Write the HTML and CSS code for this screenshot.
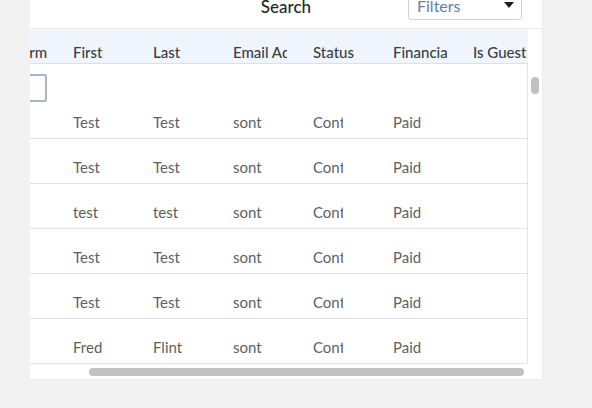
FILE: index.html
```html
<!DOCTYPE html>
<html>
<head>
<meta charset="utf-8">
<link rel="stylesheet" href="styles.css">
</head>
<body>
<div class="page">
  <div class="panel">
    <div class="toolbar">
      <div class="spacer"></div>
      <div class="title">Search</div>
      <div class="filters"><span class="filters-label">Filters</span><span class="caret"></span></div>
    </div>
    <div class="table">
      <div class="head-wrap">
        <div class="row head">
          <div class="cell c0"><span class="txt">Form</span></div>
          <div class="cell"><span class="txt">First</span></div>
          <div class="cell"><span class="txt">Last</span></div>
          <div class="cell"><span class="txt">Email Address</span></div>
          <div class="cell"><span class="txt">Status</span></div>
          <div class="cell"><span class="txt">Financial</span></div>
          <div class="cell"><span class="txt">Is Guest</span></div>
        </div>
      </div>
      <div class="head-corner"></div>
      <div class="body">
        <div class="row filter-row">
          <div class="cell c0"><div class="filter-box"></div></div>
        </div>
        <div class="row data first-row">
          <div class="cell c0"></div>
          <div class="cell"><span class="val">Test</span></div>
          <div class="cell"><span class="val">Test</span></div>
          <div class="cell"><span class="val">sont</span></div>
          <div class="cell"><span class="val">Contact</span></div>
          <div class="cell"><span class="val">Paid</span></div>
          <div class="cell"><span class="val"></span></div>
        </div>
        <div class="row data">
          <div class="cell c0"></div>
          <div class="cell"><span class="val">Test</span></div>
          <div class="cell"><span class="val">Test</span></div>
          <div class="cell"><span class="val">sont</span></div>
          <div class="cell"><span class="val">Contact</span></div>
          <div class="cell"><span class="val">Paid</span></div>
          <div class="cell"><span class="val"></span></div>
        </div>
        <div class="row data">
          <div class="cell c0"></div>
          <div class="cell"><span class="val">test</span></div>
          <div class="cell"><span class="val">test</span></div>
          <div class="cell"><span class="val">sont</span></div>
          <div class="cell"><span class="val">Contact</span></div>
          <div class="cell"><span class="val">Paid</span></div>
          <div class="cell"><span class="val"></span></div>
        </div>
        <div class="row data">
          <div class="cell c0"></div>
          <div class="cell"><span class="val">Test</span></div>
          <div class="cell"><span class="val">Test</span></div>
          <div class="cell"><span class="val">sont</span></div>
          <div class="cell"><span class="val">Contact</span></div>
          <div class="cell"><span class="val">Paid</span></div>
          <div class="cell"><span class="val"></span></div>
        </div>
        <div class="row data">
          <div class="cell c0"></div>
          <div class="cell"><span class="val">Test</span></div>
          <div class="cell"><span class="val">Test</span></div>
          <div class="cell"><span class="val">sont</span></div>
          <div class="cell"><span class="val">Contact</span></div>
          <div class="cell"><span class="val">Paid</span></div>
          <div class="cell"><span class="val"></span></div>
        </div>
        <div class="row data">
          <div class="cell c0"></div>
          <div class="cell"><span class="val">Fred</span></div>
          <div class="cell"><span class="val">Flint</span></div>
          <div class="cell"><span class="val">sont</span></div>
          <div class="cell"><span class="val">Contact</span></div>
          <div class="cell"><span class="val">Paid</span></div>
          <div class="cell"><span class="val"></span></div>
        </div>
      </div>
      <div class="vscroll"><div class="vthumb"></div></div>
      <div class="hscroll"><div class="hthumb"></div></div>
    </div>
  </div>
</div>
</body>
</html>
```

FILE: styles.css
```css
* { box-sizing: border-box; }

html, body {
  margin: 0;
  padding: 0;
  background: #f2f2f2;
  overflow: hidden;
}

body {
  font-family: "Lato", "Open Sans", sans-serif;
  width: 592px;
  height: 408px;
}

.page {
  display: flex;
  height: 408px;
  padding-left: 30px;
}

.panel {
  width: 513px;
  height: 380px;
  background: #ffffff;
  display: flex;
  flex-direction: column;
  border-right: 1px solid #ebebeb;
  border-bottom: 1px solid #ebebeb;
}

.toolbar {
  height: 29px;
  flex-shrink: 0;
  border-bottom: 1px solid #e6e6e6;
  display: grid;
  grid-template-columns: 1fr auto 1fr;
  grid-template-rows: 28px;
  align-items: end;
}

.title {
  font-size: 17px;
  font-weight: 500;
  color: #262626;
  line-height: 20px;
  margin-bottom: 11px;
}

.filters {
  justify-self: end;
  width: 114px;
  height: 32px;
  margin-right: 20px;
  margin-bottom: 8px;
  border: 1px solid #d2d2d2;
  border-radius: 3px;
  display: flex;
  align-items: flex-end;
  justify-content: space-between;
  padding: 0 7px 3px 8px;
}

.filters-label {
  font-size: 16px;
  line-height: 20px;
  color: #5d7fab;
}

.caret {
  width: 0;
  height: 0;
  border-left: 5px solid transparent;
  border-right: 5px solid transparent;
  border-top: 6px solid #1e1e1e;
  margin-bottom: 8px;
}

.table {
  flex: 1;
  display: grid;
  grid-template-columns: 498px 14px;
  grid-template-rows: 35px 300px 15px;
  overflow: hidden;
}

.head-wrap {
  padding-top: 1px;
  overflow: hidden;
}

.head-corner {
  background: #ffffff;
}

.row {
  display: flex;
  margin-left: -20px;
}

.cell {
  width: 80px;
  flex-shrink: 0;
  padding-left: 3px;
}

.cell.c0 {
  width: 60px;
}

.head {
  height: 34px;
  background: #f0f5fd;
  border-bottom: 1px solid #d9e1ec;
  align-items: flex-end;
  padding-bottom: 2px;
}

.txt {
  display: block;
  width: 54px;
  overflow: hidden;
  white-space: nowrap;
  font-size: 15px;
  font-weight: 500;
  line-height: 18px;
  color: #3a3d42;
}

.body {
  overflow: hidden;
  border-right: 1px solid #e4e4e4;
}

.filter-row {
  height: 38px;
}

.filter-box {
  margin-top: 10px;
  width: 34px;
  height: 28px;
  border: 2px solid #a9b7c8;
  border-radius: 2px;
}

.data {
  height: 45px;
  border-bottom: 1px solid #e2e2e2;
  align-items: flex-end;
  padding-bottom: 7px;
}

.data.first-row {
  height: 37px;
}

.val {
  display: block;
  width: 30px;
  overflow: hidden;
  white-space: nowrap;
  font-size: 15px;
  line-height: 18px;
  color: #5f5f5f;
}

.vscroll {
  padding-top: 13px;
  padding-left: 3px;
}

.vthumb {
  width: 8px;
  height: 17px;
  background: #c1c1c1;
  border-radius: 4px;
}

.hscroll {
  grid-column: 1 / 3;
  padding-top: 4px;
  padding-left: 59px;
}

.hthumb {
  width: 435px;
  height: 8px;
  background: #c1c1c1;
  border-radius: 4px;
}
```
